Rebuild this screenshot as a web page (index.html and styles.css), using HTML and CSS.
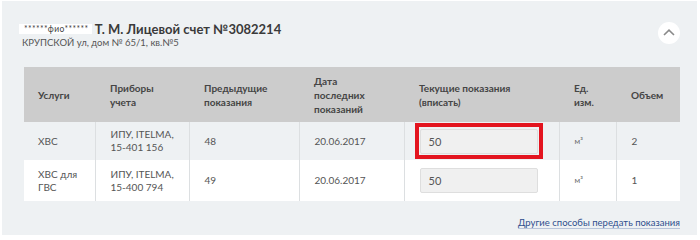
FILE: index.html
```html
<!DOCTYPE html>
<html lang="ru">
<head>
<meta charset="utf-8">
<link rel="stylesheet" href="styles.css">
</head>
<body>
<div class="panel">
  <div class="head">
    <div class="titles">
      <h1 class="title"><span class="mask">******фио******</span> Т. М. Лицевой счет №3082214</h1>
      <div class="addr">КРУПСКОЙ ул, дом № 65/1, кв.№5</div>
    </div>
    <button class="toggle" type="button" aria-label="Свернуть">
      <svg width="12" height="7" viewBox="0 0 12 7"><path d="M1 6 L6 1.2 L11 6" fill="none" stroke="#8a8a8a" stroke-width="1.6"/></svg>
    </button>
  </div>
  <table class="meters">
    <colgroup>
      <col class="c1"><col class="c2"><col class="c3"><col class="c4"><col class="c5"><col class="c6"><col class="c7">
    </colgroup>
    <thead>
      <tr>
        <th>Услуги</th>
        <th>Приборы<br>учета</th>
        <th>Предыдущие<br>показания</th>
        <th>Дата<br>последних<br>показаний</th>
        <th>Текущие показания<br>(вписать)</th>
        <th>Ед.<br>изм.</th>
        <th>Объем</th>
      </tr>
    </thead>
    <tbody>
      <tr class="r1">
        <td>ХВС</td>
        <td>ИПУ, ITELMA,<br>15-401 156</td>
        <td>48</td>
        <td>20.06.2017</td>
        <td class="inp"><span class="field">50</span><span class="mark"></span></td>
        <td class="unit">м³</td>
        <td>2</td>
      </tr>
      <tr class="r2">
        <td>ХВС для<br>ГВС</td>
        <td>ИПУ, ITELMA,<br>15-400 794</td>
        <td>49</td>
        <td>20.06.2017</td>
        <td class="inp"><span class="field">50</span></td>
        <td class="unit">м³</td>
        <td>1</td>
      </tr>
    </tbody>
  </table>
  <div class="foot"><a class="link" href="#">Другие способы передать показания</a></div>
</div>
</body>
</html>
```
FILE: styles.css
```css
html, body {
  margin: 0;
  padding: 0;
  background: #ffffff;
}
body {
  padding: 1px 3px 2px 2px;
  font-family: "Lato", "Open Sans", sans-serif;
}
.panel {
  background: #eef1f3;
  height: 234px;
  box-sizing: border-box;
  padding: 19px 17px 0 20px;
}
.head {
  display: flex;
  justify-content: space-between;
  align-items: flex-start;
}
.title {
  margin: 0;
  font-size: 13px;
  line-height: 18px;
  font-weight: 700;
  color: #3a3a3a;
}
.mask {
  display: inline-block;
  margin-left: -3px;
  padding: 0 3px 0 5px;
  background: #ffffff;
  font-size: 8.5px;
  letter-spacing: 0.4px;
  line-height: 10px;
  font-weight: 400;
  color: #444;
  vertical-align: 2px;
}
.addr {
  font-size: 9.5px;
  line-height: 10px;
  color: #555;
}
.toggle {
  width: 22px;
  height: 22px;
  margin-top: 2px;
  padding: 0;
  border: none;
  border-radius: 50%;
  background: #ffffff;
  display: flex;
  align-items: center;
  justify-content: center;
}
.toggle svg { display: block; margin-top: -2px; }
.meters {
  margin: 19px 0 0 2px;
  width: 656px;
  border-collapse: collapse;
  table-layout: fixed;
}
.c1 { width: 71px; }
.c2 { width: 94px; }
.c3 { width: 110px; }
.c4 { width: 105px; }
.c5 { width: 155px; }
.c6 { width: 57px; }
.c7 { width: 64px; }
.meters th {
  background: #cccccc;
  text-align: left;
  font-family: "Lato", sans-serif;
  font-weight: 700;
  font-size: 10px;
  line-height: 14px;
  color: #454545;
  padding: 7px 4px 6px 15px;
  height: 42px;
}
.meters th:first-child { padding-left: 14px; }
.meters td {
  font-size: 10px;
  line-height: 13px;
  color: #555;
  padding: 0 4px 0 15px;
  border-left: 1px solid #dcdfe1;
  vertical-align: middle;
}
.meters td:first-child { border-left: none; padding-left: 14px; }
.r1 td { height: 38px; background: #eef1f3; }
.r2 td { height: 41px; background: #ffffff; }
.meters td.unit { font-size: 8px; color: #666; }
.inp { position: relative; }
.field {
  display: block;
  width: 118px;
  height: 25px;
  box-sizing: border-box;
  border: 1px solid #dedede;
  border-radius: 2px;
  background: #f0f0f0;
  font-size: 11px;
  line-height: 23px;
  padding-left: 8px;
  color: #555;
}
.mark {
  position: absolute;
  left: 10px;
  top: 1px;
  width: 128px;
  height: 36px;
  box-sizing: border-box;
  border: 4px solid #e3141f;
}
.foot {
  text-align: right;
  padding: 9px 0 0 0;
}
.link {
  font-size: 9.5px;
  line-height: 13px;
  color: #2f4f8e;
  text-decoration: none;
  border-bottom: 1px solid #b8c4da;
}
```
